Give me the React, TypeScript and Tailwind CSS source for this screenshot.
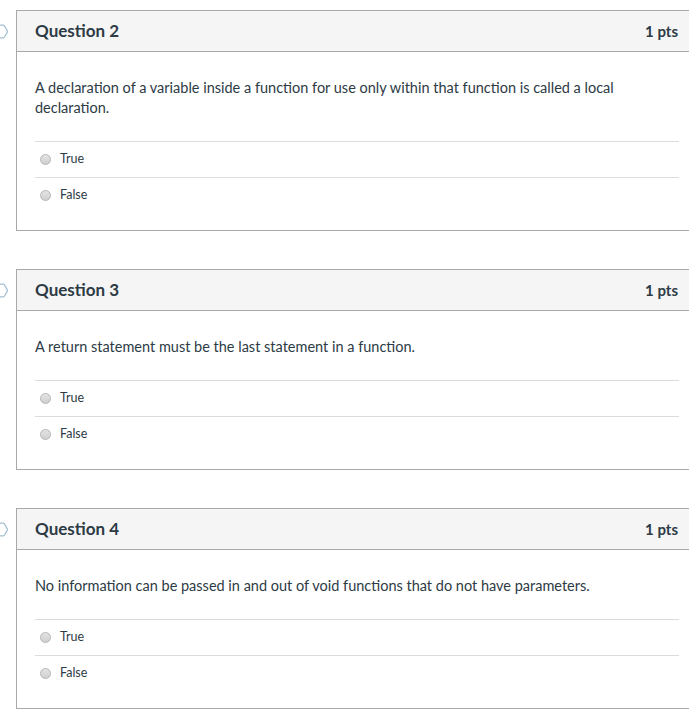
import React from 'react';

interface Question {
  num: number;
  text: string;
}

const QUESTIONS: Question[] = [
  {
    num: 2,
    text: 'A declaration of a variable inside a function for use only within that function is called a local declaration.',
  },
  { num: 3, text: 'A return statement must be the last statement in a function.' },
  { num: 4, text: 'No information can be passed in and out of void functions that do not have parameters.' },
];

function FlagIcon() {
  return (
    <svg width="9" height="15" viewBox="0 0 9 15" className="block">
      <path d="M0 1.2 L3.2 1.2 Q4 1.2 4.5 2 L7.3 6.8 Q7.7 7.5 7.3 8.2 L4.5 13 Q4 13.8 3.2 13.8 L0 13.8" fill="none" stroke="#a3bfd1" strokeWidth="1.3" strokeLinejoin="round" />
    </svg>
  );
}

function Radio() {
  return (
    <span className="inline-block h-[11px] w-[11px] shrink-0 rounded-full border border-[#b5b5b5] bg-gradient-to-b from-[#e4e4e4] to-[#cfcfcf]" />
  );
}

function Answer({ label }: { label: string }) {
  return (
    <div className="flex h-[36px] items-center gap-[9px] border-t border-[#dcdcdc] pl-[5px] text-[12.5px] text-[#2d3b45]">
      <Radio />
      <span>{label}</span>
    </div>
  );
}

function QuestionCard({ q }: { q: Question }) {
  return (
    <div className="flex">
      <div className="flex w-[16px] shrink-0 items-start pt-[14px]">
        <FlagIcon />
      </div>
      <div className="flex-1 border-y border-l border-[#a9a9a9]">
        <div className="flex h-[41px] items-center justify-between border-b border-[#a9a9a9] bg-[#f5f5f5] pl-[18px] pr-[11px] text-[#2d3b45]">
          <span className="text-[17px] font-bold">Question {q.num}</span>
          <span className="text-[15px] font-bold">1 pts</span>
        </div>
        <div className="pl-[18px] pr-[10px] pb-[17px] pt-[26px]">
          <p className="mb-[23px] text-[14.5px] leading-[20px] text-[#2d3b45]">{q.text}</p>
          <Answer label="True" />
          <Answer label="False" />
        </div>
      </div>
    </div>
  );
}

export default function App() {
  return (
    <div className="min-h-[728px] overflow-hidden bg-white pt-[10px]" style={{ fontFamily: 'Lato, "Open Sans", sans-serif' }}>
      <div className="flex flex-col gap-[38px]">
        {QUESTIONS.map((q) => (
          <QuestionCard key={q.num} q={q} />
        ))}
      </div>
    </div>
  );
}
